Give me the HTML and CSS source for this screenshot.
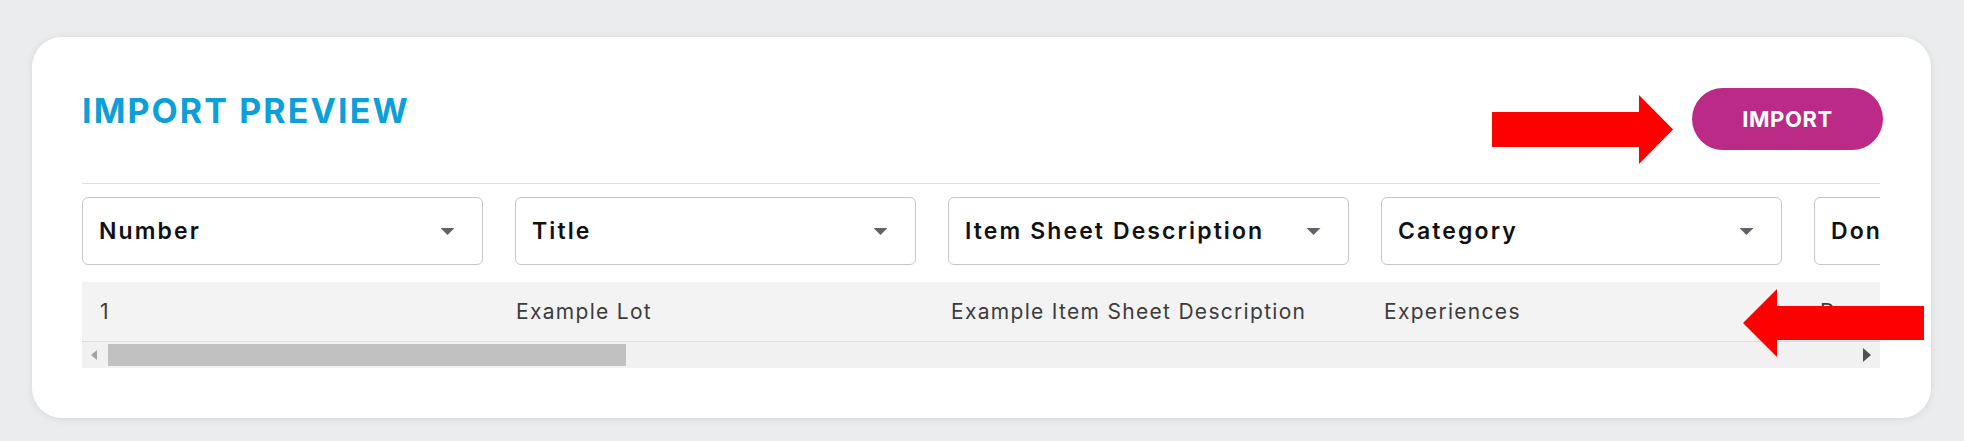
FILE: index.html
```html
<!DOCTYPE html>
<html lang="en">
<head>
<meta charset="utf-8">
<title>Import Preview</title>
<link rel="stylesheet" href="styles.css">
</head>
<body>
<div class="card">
  <div class="header">
    <h1 class="title">IMPORT PREVIEW</h1>
    <button class="import-btn">IMPORT</button>
  </div>
  <div class="table-wrap">
    <div class="scroller">
      <div class="selects">
        <div class="select"><span class="label">Number</span><svg class="caret" viewBox="0 0 14 7" width="15" height="7"><path d="M0 0H14L7 7Z"/></svg></div>
        <div class="select"><span class="label">Title</span><svg class="caret" viewBox="0 0 14 7" width="15" height="7"><path d="M0 0H14L7 7Z"/></svg></div>
        <div class="select"><span class="label">Item Sheet Description</span><svg class="caret" viewBox="0 0 14 7" width="15" height="7"><path d="M0 0H14L7 7Z"/></svg></div>
        <div class="select"><span class="label">Category</span><svg class="caret" viewBox="0 0 14 7" width="15" height="7"><path d="M0 0H14L7 7Z"/></svg></div>
        <div class="select"><span class="label">Donor</span><svg class="caret" viewBox="0 0 14 7" width="15" height="7"><path d="M0 0H14L7 7Z"/></svg></div>
      </div>
      <div class="row">
        <div class="cell first">1</div>
        <div class="cell c2">Example Lot</div>
        <div class="cell c3">Example Item Sheet Description</div>
        <div class="cell c4">Experiences</div>
        <div class="cell c5">Donor Name</div>
      </div>
    </div>
    <div class="hscroll">
      <svg class="sarrow left" viewBox="0 0 6 10" width="6" height="10"><path d="M6 0V10L0 5Z"/></svg>
      <div class="thumb"></div>
      <div class="track-rest"></div>
      <svg class="sarrow right" viewBox="0 0 8 14" width="8" height="14"><path d="M0 0V14L8 7Z"/></svg>
    </div>
  </div>
  <svg class="red-arrow arrow-right" viewBox="0 0 181 69" width="181" height="69"><polygon points="0,17 147,17 147,0 181,34.5 147,69 147,52 0,52"/></svg>
  <svg class="red-arrow arrow-left" viewBox="0 0 181 68" width="181" height="68"><polygon points="0,34 34,0 34,17 181,17 181,51 34,51 34,68"/></svg>
</div>
</body>
</html>
```

FILE: styles.css
```css
* { box-sizing: border-box; }
html, body { margin: 0; padding: 0; }
body {
  background: #ebecee;
  font-family: Inter, "Noto Sans", "DejaVu Sans", sans-serif;
  width: 1964px;
  height: 441px;
  overflow: hidden;
}
.card {
  position: relative;
  margin: 37px 0 0 32px;
  width: 1899px;
  height: 381px;
  background: #ffffff;
  border-radius: 30px;
  box-shadow: 0 1px 8px rgba(0, 0, 0, 0.09);
  padding: 51px 48px 0 50px;
}
.header {
  display: flex;
  justify-content: space-between;
  align-items: flex-start;
  height: 62px;
  margin-bottom: 33px;
}
.title {
  margin: 0;
  padding-top: 6px;
  font-size: 34px;
  line-height: 34px;
  font-weight: 700;
  letter-spacing: 2.1px;
  color: #0c9fd9;
}
.import-btn {
  width: 191px;
  height: 62px;
  border: none;
  border-radius: 31px;
  background: #bb2a86;
  color: #ffffff;
  font-family: Inter, "Noto Sans", sans-serif;
  font-size: 22px;
  font-weight: 700;
  letter-spacing: 0.6px;
  padding: 0;
}
.table-wrap {
  margin-right: 3px;
  border-top: 1px solid #dddfe2;
  padding-top: 13px;
}
.scroller {
  overflow: hidden;
}
.selects {
  display: flex;
  gap: 32px;
  width: 2600px;
}
.select {
  flex: 0 0 401px;
  height: 68px;
  border: 1.5px solid #c3c6cb;
  border-radius: 6px;
  display: flex;
  align-items: center;
  justify-content: space-between;
  padding: 0 27px 0 16px;
}
.label {
  font-size: 23px;
  font-weight: 600;
  color: #111111;
  letter-spacing: 2.1px;
  white-space: nowrap;
}
.caret { fill: #5f6368; flex-shrink: 0; }
.row {
  margin-top: 17px;
  width: 2600px;
  height: 60px;
  background: #f3f3f3;
  border-bottom: 1px solid #dedede;
  display: grid;
  grid-template-columns: 433px 433px 433px 433px 433px;
  align-items: center;
}
.cell {
  font-size: 21px;
  color: #3c3c3c;
  white-space: nowrap;
  letter-spacing: 1.3px;
}
.cell.first { padding-left: 18px; }
.cell.c2 { padding-left: 1px; }
.cell.c3 { padding-left: 3px; }
.cell.c4 { padding-left: 3px; }
.cell.c5 { padding-left: 6px; }
.hscroll {
  height: 26px;
  background: #f1f1f1;
  display: flex;
  align-items: center;
}
.sarrow.left { fill: #a3a3a3; margin-left: 9px; margin-right: 11px; }
.thumb {
  width: 518px;
  height: 22px;
  background: #c1c1c1;
}
.track-rest { flex: 1; }
.sarrow.right { fill: #505050; margin-right: 9px; }
.red-arrow {
  position: absolute;
  fill: #ff0000;
}
.arrow-right { left: 1460px; top: 58px; }
.arrow-left { left: 1711px; top: 252px; }
```
